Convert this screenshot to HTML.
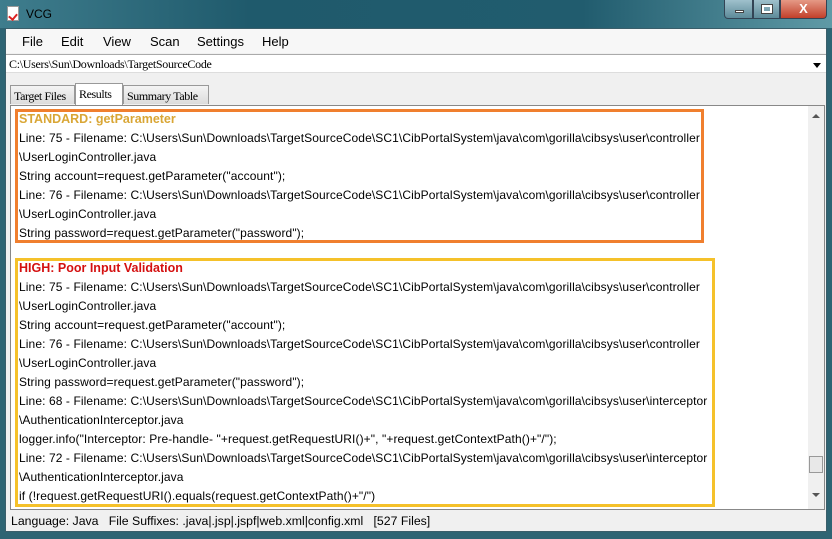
<!DOCTYPE html>
<html><head><meta charset="utf-8"><style>
*{margin:0;padding:0;box-sizing:border-box}
body{width:832px;height:539px;overflow:hidden;background:#2e6473;font-family:"Liberation Sans",Arial,sans-serif;position:relative}
.title{position:absolute;left:0;top:0;width:832px;height:28px;background:linear-gradient(90deg,#3f7d8d 0%,#1f5a6c 30%,#215c6e 70%,#5f9aa6 100%)}
.title .t{position:absolute;left:26px;top:7px;font-size:12px;color:#000}
.icon{position:absolute;left:7px;top:6px;width:12px;height:15px;background:#fff;border:1px solid #999}
.icon:after{content:"";position:absolute;left:2px;top:5px;width:4px;height:6px;border-right:2px solid #d22;border-bottom:2px solid #d22;transform:rotate(40deg)}
.btn{position:absolute;top:0;height:19px;border:1px solid #345;border-top:none;background:linear-gradient(#9fc0cc,#5d8a99)}
.client{position:absolute;left:5px;top:28px;width:822px;height:504px;background:#f0f0f0;border:1px solid #3a5e6a}
.menu{position:absolute;left:0;top:0;width:820px;height:24px;background:#f7f7f7;font-size:13px}
.menu span{position:absolute;top:5px}
.path{position:absolute;left:0;top:25px;width:820px;height:19px;background:#fff;border-top:1px solid #aaa;border-bottom:1px solid #ddd;font-family:"Liberation Serif",serif;font-size:12px;padding:2px 3px;letter-spacing:-0.3px}
.arrow{position:absolute;right:5px;top:8px;border-left:4px solid transparent;border-right:4px solid transparent;border-top:5px solid #000}
.tab{position:absolute;top:56px;height:19px;border:1px solid #999;border-bottom:none;background:linear-gradient(#f4f4f4,#dcdcdc);font-family:"Liberation Serif",serif;font-size:12px;padding:3px 3px;letter-spacing:-0.4px}
.content{position:absolute;left:4px;top:76px;width:815px;height:405px;background:#fff;border:1px solid #888}
.sb{position:absolute;right:0;top:0;width:16px;height:403px;background:#f0f0f0}
.line{position:absolute;left:8px;font-size:12px;color:#000;white-space:nowrap;letter-spacing:0.1px}
.box{position:absolute;border:3px solid}
.status{position:absolute;left:0;top:482px;width:820px;height:20px;font-size:12.3px;padding:3px 5px;color:#000}
</style></head><body>
<div class="title"><div class="icon"></div><div class="t">VCG</div>
<div class="btn" style="left:724px;width:29px;border-radius:0 0 0 4px"><div style="position:absolute;left:10px;top:10px;width:9px;height:3px;background:#fff;border:1px solid #444"></div></div>
<div class="btn" style="left:753px;width:27px"><div style="position:absolute;left:8px;top:5px;width:10px;height:8px;border:2px solid #fff;outline:1px solid #444"></div></div>
<div class="btn" style="left:780px;width:47px;background:linear-gradient(#e59a86,#c2402a);border-radius:0 0 4px 0;color:#fff;font-weight:bold;font-size:13px;text-align:center;line-height:17px">X</div>
</div>
<div class="client">
<div class="menu"><span style="left:16px">File</span><span style="left:55px">Edit</span><span style="left:97px">View</span><span style="left:144px">Scan</span><span style="left:191px">Settings</span><span style="left:256px">Help</span></div>
<div class="path">C:\Users\Sun\Downloads\TargetSourceCode<div class="arrow"></div></div>
<div class="tab" style="left:4px;width:65px">Target Files</div>
<div class="tab" style="left:117px;width:86px">Summary Table</div>
<div class="tab" style="left:69px;width:48px;top:54px;height:22px;background:#fff;z-index:2">Results</div>
<div class="content">
<div class="sb"><div style="position:absolute;left:4px;top:8px;border-left:4px solid transparent;border-right:4px solid transparent;border-bottom:4px solid #555"></div>
<div style="position:absolute;left:1px;top:350px;width:14px;height:17px;background:#e8e8e8;border:1px solid #999"></div>
<div style="position:absolute;left:4px;top:387px;border-left:4px solid transparent;border-right:4px solid transparent;border-top:4px solid #555"></div></div>
<div class="box" style="left:4px;top:3px;width:689px;height:134px;border-color:#f07f2e"></div>
<div class="box" style="left:4px;top:152px;width:700px;height:249px;border-color:#f5c12a"></div>
<div class="line" style="top:6px;color:#d9a635;font-weight:bold;font-size:12.5px;letter-spacing:0">STANDARD: getParameter</div>
<div class="line" style="top:25px">Line: 75 - Filename: C:\Users\Sun\Downloads\TargetSourceCode\SC1\CibPortalSystem\java\com\gorilla\cibsys\user\controller</div>
<div class="line" style="top:44px">\UserLoginController.java</div>
<div class="line" style="top:63px">String account=request.getParameter("account");</div>
<div class="line" style="top:82px">Line: 76 - Filename: C:\Users\Sun\Downloads\TargetSourceCode\SC1\CibPortalSystem\java\com\gorilla\cibsys\user\controller</div>
<div class="line" style="top:101px">\UserLoginController.java</div>
<div class="line" style="top:120px">String password=request.getParameter("password");</div>
<div class="line" style="top:155px;color:#d41010;font-weight:bold;font-size:12.5px;letter-spacing:0">HIGH: Poor Input Validation</div>
<div class="line" style="top:174px">Line: 75 - Filename: C:\Users\Sun\Downloads\TargetSourceCode\SC1\CibPortalSystem\java\com\gorilla\cibsys\user\controller</div>
<div class="line" style="top:193px">\UserLoginController.java</div>
<div class="line" style="top:212px">String account=request.getParameter("account");</div>
<div class="line" style="top:231px">Line: 76 - Filename: C:\Users\Sun\Downloads\TargetSourceCode\SC1\CibPortalSystem\java\com\gorilla\cibsys\user\controller</div>
<div class="line" style="top:250px">\UserLoginController.java</div>
<div class="line" style="top:269px">String password=request.getParameter("password");</div>
<div class="line" style="top:288px">Line: 68 - Filename: C:\Users\Sun\Downloads\TargetSourceCode\SC1\CibPortalSystem\java\com\gorilla\cibsys\user\interceptor</div>
<div class="line" style="top:307px">\AuthenticationInterceptor.java</div>
<div class="line" style="top:326px">logger.info("Interceptor: Pre-handle- "+request.getRequestURI()+", "+request.getContextPath()+"/");</div>
<div class="line" style="top:345px">Line: 72 - Filename: C:\Users\Sun\Downloads\TargetSourceCode\SC1\CibPortalSystem\java\com\gorilla\cibsys\user\interceptor</div>
<div class="line" style="top:364px">\AuthenticationInterceptor.java</div>
<div class="line" style="top:383px">if (!request.getRequestURI().equals(request.getContextPath()+"/")</div>
</div>
<div class="status">Language: Java &nbsp; File Suffixes: .java|.jsp|.jspf|web.xml|config.xml &nbsp; [527 Files]</div>
</div>
</body></html>
